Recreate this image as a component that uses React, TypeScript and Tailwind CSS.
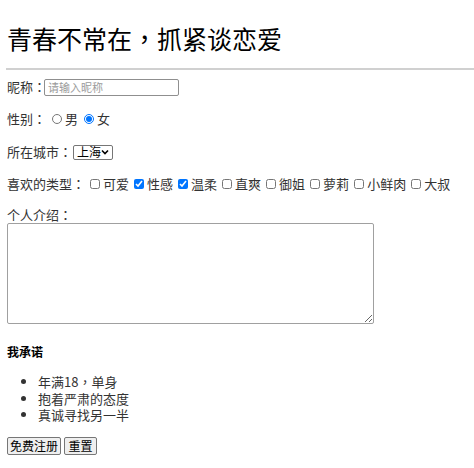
import React from "react";

const TYPES = [
  { label: "可爱", checked: false },
  { label: "性感", checked: true },
  { label: "温柔", checked: true },
  { label: "直爽", checked: false },
  { label: "御姐", checked: false },
  { label: "萝莉", checked: false },
  { label: "小鲜肉", checked: false },
  { label: "大叔", checked: false },
];

// centred full-width punctuation, as in the reference
function P({ children }: { children: React.ReactNode }) {
  return <span style={{ fontFamily: '"Noto Sans CJK TC", sans-serif' }}>{children}</span>;
}

export default function App() {
  return (
    <div
      className="w-[474px] h-[468px] bg-white pl-[7px] text-[13px] text-[#333] overflow-hidden"
      style={{ fontFamily: '"Noto Sans CJK SC", "Noto Sans", sans-serif' }}
    >
      <h1 className="mt-[23px] h-[30px] leading-[30px] text-[25px] text-black font-normal">
        青春不常在<P>，</P>抓紧谈恋爱
      </h1>
      <div className="mt-[15px] -ml-[1px] border-t-2 border-[#d0d0d0]" />

      <form onSubmit={(e) => e.preventDefault()}>
        <div className="mt-[8px] h-[18px] flex items-center">
          <label>
            昵称<P>：</P>
          </label>
          <input
            type="text"
            placeholder="请输入昵称"
            className="-ml-[2px] w-[135px] h-[17px] border border-[#8f8f8f] rounded-[2px] px-[3px] text-[11px] placeholder:text-[#9a9a9a]"
          />
        </div>

        <div className="mt-[14px] h-[18px] flex items-center">
          <span>
            性别<P>：</P>
          </span>
          <input type="radio" name="sex" className="ml-[6px] w-[10px] h-[10px]" />
          <span className="ml-[3px]">男</span>
          <input type="radio" name="sex" defaultChecked className="ml-[6px] w-[10px] h-[10px]" />
          <span className="ml-[3px]">女</span>
        </div>

        <div className="mt-[15px] h-[18px] flex items-center">
          <span>
            所在城市<P>：</P>
          </span>
          <div className="ml-[1px] h-[15px] w-[40px] border border-[#767676] rounded-[2px] flex items-center px-[3px] text-[12px] text-black">
            <span className="leading-none">上海</span>
            <svg width="8" height="6" viewBox="0 0 8 6" className="ml-auto">
              <path d="M1 1.5 L4 4.5 L7 1.5" fill="none" stroke="#000" strokeWidth="1.6" />
            </svg>
          </div>
        </div>

        <div className="mt-[14px] h-[18px] flex items-center">
          <span>
            喜欢的类型<P>：</P>
          </span>
          {TYPES.map((t) => (
            <React.Fragment key={t.label}>
              <input
                type="checkbox"
                defaultChecked={t.checked}
                className="ml-[5px] w-[10px] h-[10px]"
              />
              <span className="ml-[3px]">{t.label}</span>
            </React.Fragment>
          ))}
        </div>

        <div className="mt-[14px] h-[16px] leading-[16px]">
          个人介绍<P>：</P>
        </div>
        <textarea className="block w-[367px] h-[101px] border border-[#a0a0a0] rounded-[2px]" />

        <div className="mt-[20px] h-[16px] leading-[16px] font-bold text-black text-[12px]">我承诺</div>
        <ul className="mt-[14px] pl-[31px] list-disc">
          <li className="h-[16.5px] leading-[16.5px]">
            年满18<P>，</P>单身
          </li>
          <li className="h-[16.5px] leading-[16.5px]">抱着严肃的态度</li>
          <li className="h-[16.5px] leading-[16.5px]">真诚寻找另一半</li>
        </ul>

        <div className="mt-[13px] flex gap-[3px]">
          <button
            type="submit"
            className="h-[18px] w-[54px] bg-[#efefef] border border-[#767676] rounded-[2px] text-[12px] text-black leading-none"
          >
            免费注册
          </button>
          <button
            type="reset"
            className="h-[18px] w-[33px] bg-[#efefef] border border-[#767676] rounded-[2px] text-[12px] text-black leading-none"
          >
            重置
          </button>
        </div>
      </form>
    </div>
  );
}
